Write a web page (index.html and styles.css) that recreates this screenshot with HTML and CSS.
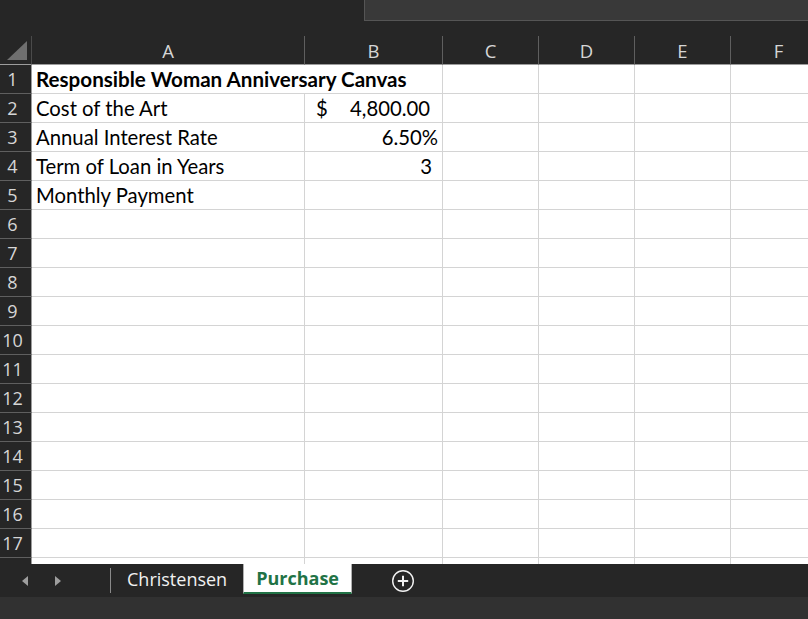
FILE: index.html
```html
<!DOCTYPE html>
<html>
<head>
<meta charset="utf-8">
<link rel="stylesheet" href="styles.css">
</head>
<body>
<div class="app">
  <div class="titlebar"><div class="namebox"></div></div>
  <div class="gap"></div>
  <div class="sheet">
    <div class="corner"><span class="tri"></span></div>
    <div class="colh">A</div>
    <div class="colh">B</div>
    <div class="colh">C</div>
    <div class="colh">D</div>
    <div class="colh">E</div>
    <div class="colh">F</div>

    <div class="rowh">1</div>
    <div class="cell bold span2">Responsible Woman Anniversary Canvas</div>
    <div class="cell"></div><div class="cell"></div><div class="cell"></div><div class="cell"></div>

    <div class="rowh">2</div>
    <div class="cell">Cost of the Art</div>
    <div class="cell acct"><span>$</span><span>4,800.00</span></div>
    <div class="cell"></div><div class="cell"></div><div class="cell"></div><div class="cell"></div>

    <div class="rowh">3</div>
    <div class="cell">Annual Interest Rate</div>
    <div class="cell num pct">6.50%</div>
    <div class="cell"></div><div class="cell"></div><div class="cell"></div><div class="cell"></div>

    <div class="rowh">4</div>
    <div class="cell">Term of Loan in Years</div>
    <div class="cell num gen">3</div>
    <div class="cell"></div><div class="cell"></div><div class="cell"></div><div class="cell"></div>

    <div class="rowh">5</div>
    <div class="cell">Monthly Payment</div>
    <div class="cell"></div><div class="cell"></div><div class="cell"></div><div class="cell"></div><div class="cell"></div>

    <div class="rowh">6</div><div class="cell"></div><div class="cell"></div><div class="cell"></div><div class="cell"></div><div class="cell"></div><div class="cell"></div>
    <div class="rowh">7</div><div class="cell"></div><div class="cell"></div><div class="cell"></div><div class="cell"></div><div class="cell"></div><div class="cell"></div>
    <div class="rowh">8</div><div class="cell"></div><div class="cell"></div><div class="cell"></div><div class="cell"></div><div class="cell"></div><div class="cell"></div>
    <div class="rowh">9</div><div class="cell"></div><div class="cell"></div><div class="cell"></div><div class="cell"></div><div class="cell"></div><div class="cell"></div>
    <div class="rowh">10</div><div class="cell"></div><div class="cell"></div><div class="cell"></div><div class="cell"></div><div class="cell"></div><div class="cell"></div>
    <div class="rowh">11</div><div class="cell"></div><div class="cell"></div><div class="cell"></div><div class="cell"></div><div class="cell"></div><div class="cell"></div>
    <div class="rowh">12</div><div class="cell"></div><div class="cell"></div><div class="cell"></div><div class="cell"></div><div class="cell"></div><div class="cell"></div>
    <div class="rowh">13</div><div class="cell"></div><div class="cell"></div><div class="cell"></div><div class="cell"></div><div class="cell"></div><div class="cell"></div>
    <div class="rowh">14</div><div class="cell"></div><div class="cell"></div><div class="cell"></div><div class="cell"></div><div class="cell"></div><div class="cell"></div>
    <div class="rowh">15</div><div class="cell"></div><div class="cell"></div><div class="cell"></div><div class="cell"></div><div class="cell"></div><div class="cell"></div>
    <div class="rowh">16</div><div class="cell"></div><div class="cell"></div><div class="cell"></div><div class="cell"></div><div class="cell"></div><div class="cell"></div>
    <div class="rowh">17</div><div class="cell"></div><div class="cell"></div><div class="cell"></div><div class="cell"></div><div class="cell"></div><div class="cell"></div>
    <div class="rowh part"></div><div class="cell part"></div><div class="cell part"></div><div class="cell part"></div><div class="cell part"></div><div class="cell part"></div><div class="cell part"></div>
  </div>
  <div class="tabbar">
    <div class="navs">
      <svg class="arrow" width="8" height="12" viewBox="0 0 8 12"><polygon points="7,1 7,11 1,6" /></svg>
      <svg class="arrow" width="8" height="12" viewBox="0 0 8 12"><polygon points="1,1 1,11 7,6" /></svg>
    </div>
    <div class="sep"></div>
    <div class="tab">Christensen</div>
    <div class="tab active">Purchase</div>
    <div class="add">
      <svg width="24" height="24" viewBox="0 0 24 24"><circle cx="12" cy="12" r="10.3" fill="none" stroke="#f2f2f2" stroke-width="1.4"/><path d="M12 6.8v10.4M6.8 12h10.4" stroke="#f2f2f2" stroke-width="2"/></svg>
    </div>
  </div>
  <div class="status"></div>
</div>
</body>
</html>
```
FILE: styles.css
```css
html, body {
  margin: 0;
  padding: 0;
  background: #262626;
}
.app {
  width: 808px;
  height: 619px;
  overflow: hidden;
  display: flex;
  flex-direction: column;
  background: #262626;
}
.titlebar {
  height: 21px;
  display: flex;
  justify-content: flex-end;
  flex: none;
}
.namebox {
  width: 443px;
  height: 20px;
  background: #393939;
  border-left: 1px solid #555;
  border-bottom: 1px solid #555;
}
.gap {
  height: 15px;
  flex: none;
}
.sheet {
  display: grid;
  grid-template-columns: 32px 273px 138px 96px 96px 96px 96px;
  grid-template-rows: 29px repeat(17, 29px) 6px;
  width: 827px;
  flex: none;
}
.corner, .colh {
  background: #262626;
  border-right: 1px solid #5f5f5f;
  border-bottom: 1px solid #9c9c9c;
  box-sizing: border-box;
}
.corner {
  position: relative;
  border-right-color: #4a4a4a;
}
.tri {
  position: absolute;
  right: 4px;
  bottom: 4px;
  width: 0;
  height: 0;
  border-left: 20px solid transparent;
  border-bottom: 19px solid #6f6f6f;
}
.colh {
  color: #d6d6d6;
  font-family: "Open Sans", "Noto Sans", sans-serif;
  font-size: 18.5px;
  text-align: center;
  line-height: 29px;
}
.rowh {
  background: #262626;
  border-right: 1px solid #9c9c9c;
  border-bottom: 1px solid #5f5f5f;
  box-sizing: border-box;
  color: #d6d6d6;
  font-family: "Open Sans", "Noto Sans", sans-serif;
  font-size: 18px;
  line-height: 28px;
  padding-right: 6px;
  text-align: center;
}
.cell {
  background: #ffffff;
  border-right: 1px solid #d4d4d4;
  border-bottom: 1px solid #d4d4d4;
  box-sizing: border-box;
  color: #000;
  font-family: Lato, "Liberation Sans", sans-serif;
  font-size: 20.3px;
  line-height: 28px;
  padding: 0 4px;
  white-space: nowrap;
  overflow: hidden;
}
.part {
  border-bottom: none;
}
.bold {
  font-weight: bold;
  font-size: 20.6px;
}
.span2 {
  grid-column: span 2;
}
.acct {
  display: flex;
  justify-content: space-between;
  padding-left: 11px;
  padding-right: 12px;
}
.num {
  text-align: right;
}
.pct {
  padding-right: 4px;
}
.gen {
  padding-right: 10px;
}
.tabbar {
  height: 33px;
  flex: none;
  display: flex;
  align-items: stretch;
  background: #262626;
  font-family: "Open Sans", "Noto Sans", sans-serif;
  font-size: 18px;
}
.navs {
  width: 110px;
  display: flex;
  align-items: center;
  gap: 25px;
  padding-left: 21px;
  box-sizing: border-box;
}
.arrow polygon {
  fill: #9e9e9e;
}
.sep {
  width: 1px;
  background: #8a8a8a;
  margin: 4px 0 4px 0;
}
.tab {
  color: #f2f2f2;
  padding: 0 16px;
  line-height: 31px;
}
.tab.active {
  background: #ffffff;
  color: #217346;
  font-weight: bold;
  border-left: 1px solid #b0b0b0;
  border-right: 1px solid #b0b0b0;
  border-bottom: 2px solid #217346;
  margin-bottom: 3px;
  padding: 0 12px;
  line-height: 29px;
}
.add {
  display: flex;
  align-items: center;
  margin-left: 39px;
}
.status {
  flex: 1;
  background: #313131;
}
```
